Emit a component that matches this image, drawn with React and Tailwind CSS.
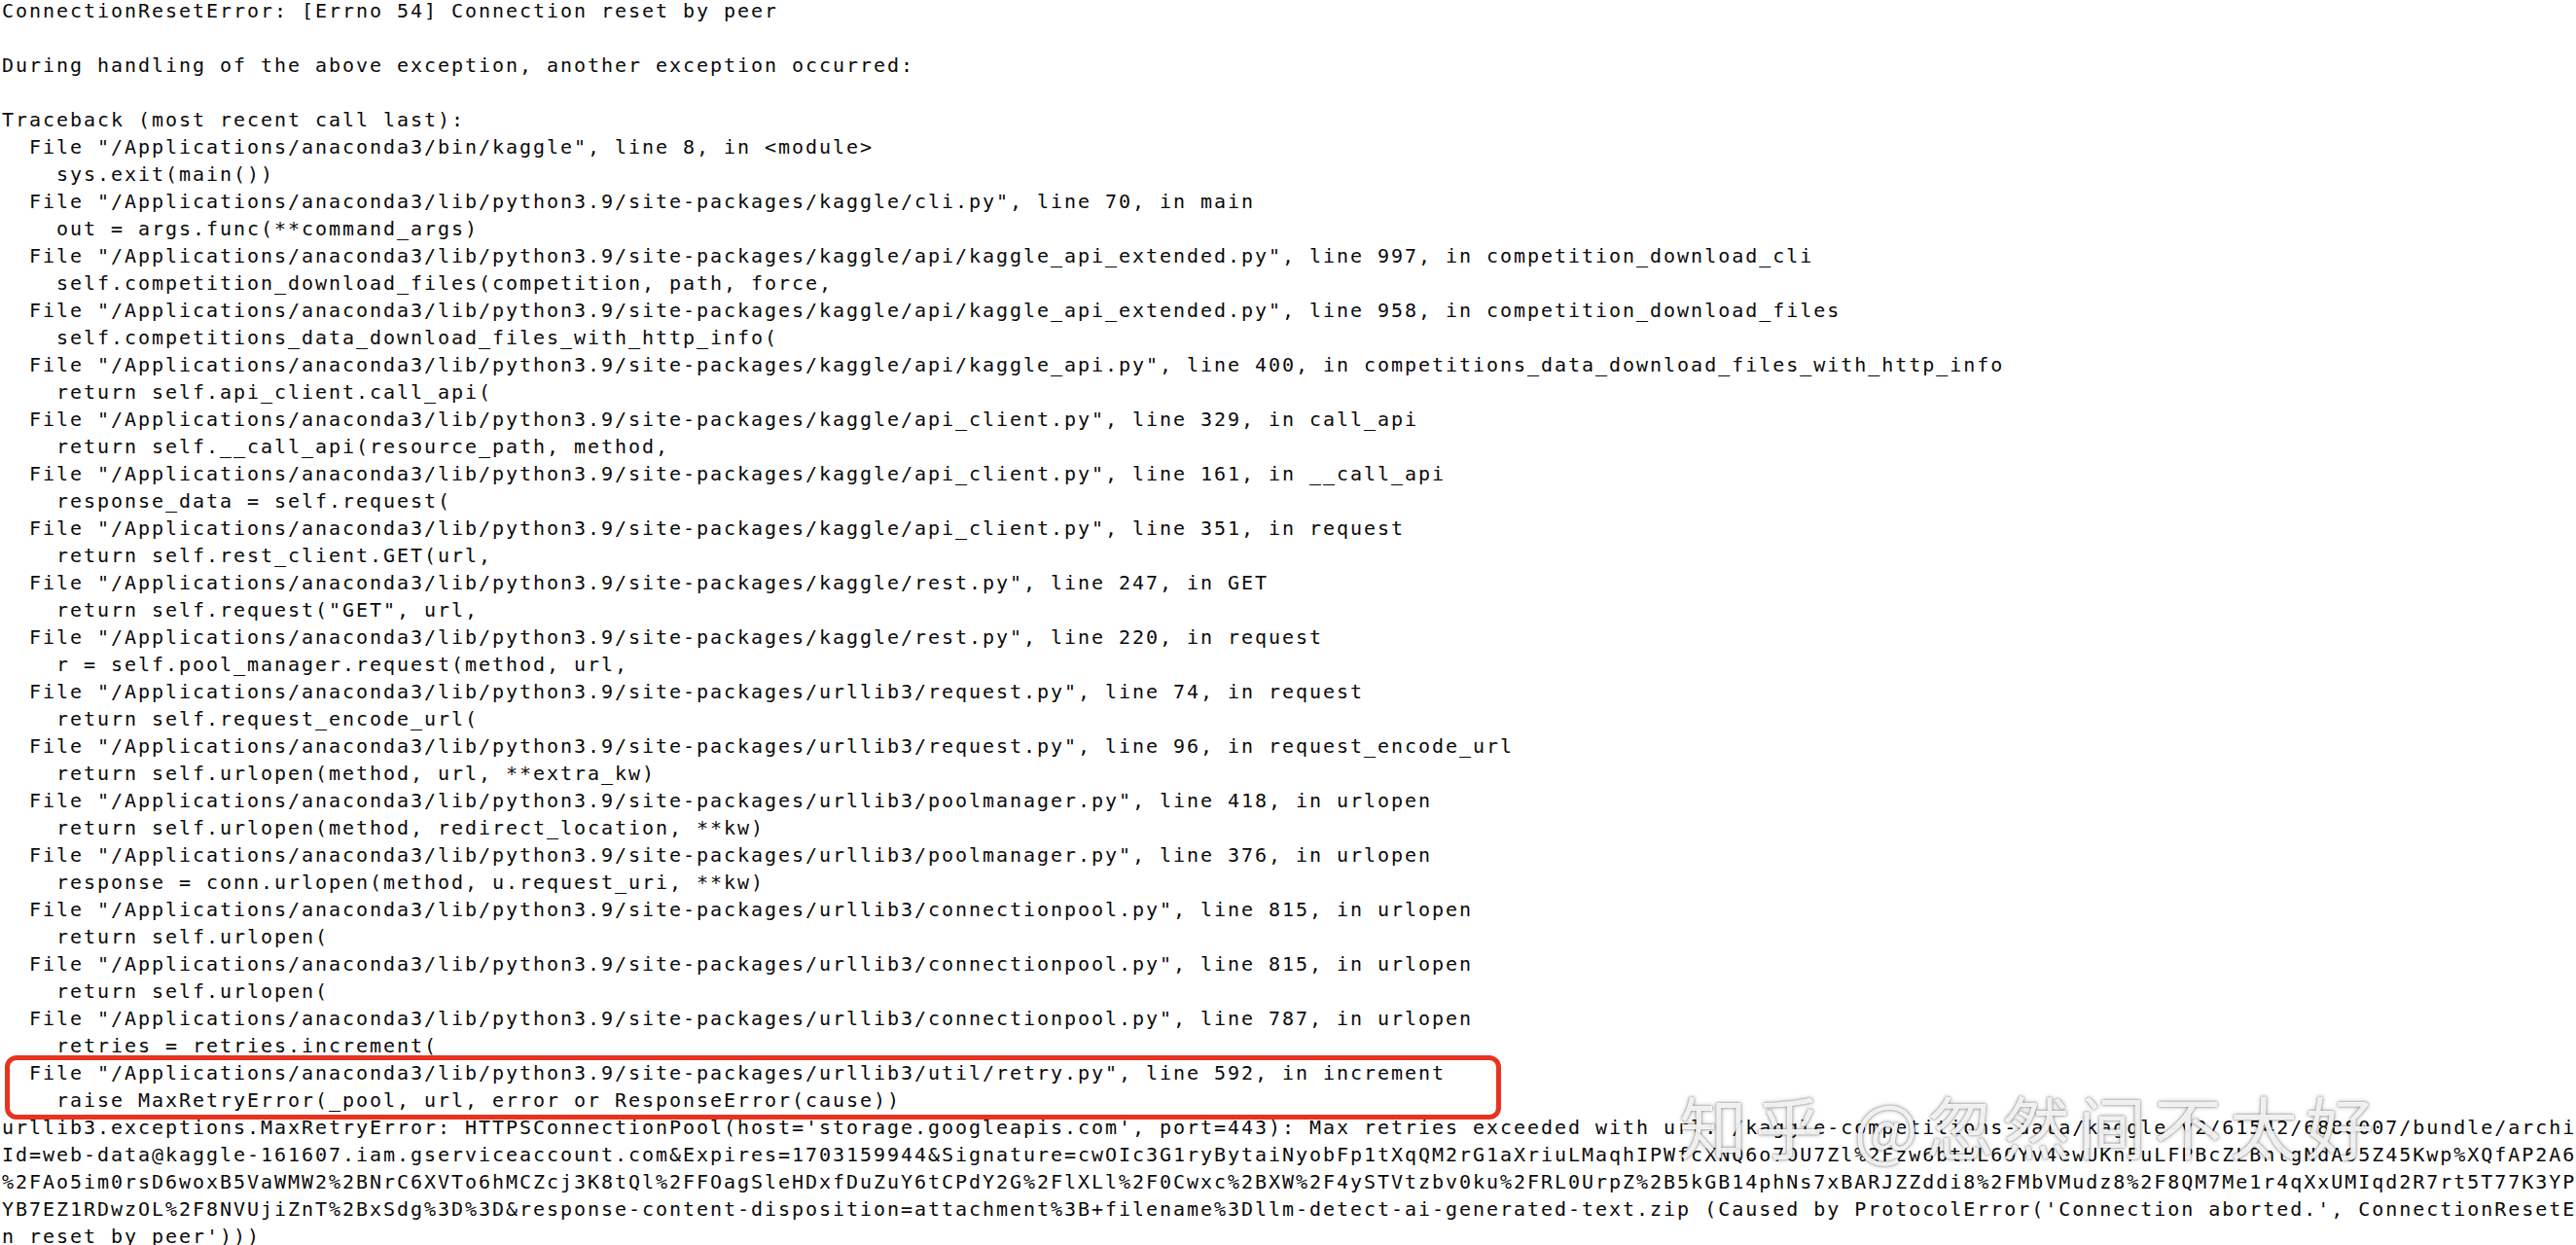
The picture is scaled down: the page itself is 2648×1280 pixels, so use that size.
const PKG = '"/Applications/anaconda3/lib/python3.9/site-packages/'

const lines = [
  'ConnectionResetError: [Errno 54] Connection reset by peer',
  '',
  'During handling of the above exception, another exception occurred:',
  '',
  'Traceback (most recent call last):',
  '  File "/Applications/anaconda3/bin/kaggle", line 8, in <module>',
  '    sys.exit(main())',
  `  File ${PKG}kaggle/cli.py", line 70, in main`,
  '    out = args.func(**command_args)',
  `  File ${PKG}kaggle/api/kaggle_api_extended.py", line 997, in competition_download_cli`,
  '    self.competition_download_files(competition, path, force,',
  `  File ${PKG}kaggle/api/kaggle_api_extended.py", line 958, in competition_download_files`,
  '    self.competitions_data_download_files_with_http_info(',
  `  File ${PKG}kaggle/api/kaggle_api.py", line 400, in competitions_data_download_files_with_http_info`,
  '    return self.api_client.call_api(',
  `  File ${PKG}kaggle/api_client.py", line 329, in call_api`,
  '    return self.__call_api(resource_path, method,',
  `  File ${PKG}kaggle/api_client.py", line 161, in __call_api`,
  '    response_data = self.request(',
  `  File ${PKG}kaggle/api_client.py", line 351, in request`,
  '    return self.rest_client.GET(url,',
  `  File ${PKG}kaggle/rest.py", line 247, in GET`,
  '    return self.request("GET", url,',
  `  File ${PKG}kaggle/rest.py", line 220, in request`,
  '    r = self.pool_manager.request(method, url,',
  `  File ${PKG}urllib3/request.py", line 74, in request`,
  '    return self.request_encode_url(',
  `  File ${PKG}urllib3/request.py", line 96, in request_encode_url`,
  '    return self.urlopen(method, url, **extra_kw)',
  `  File ${PKG}urllib3/poolmanager.py", line 418, in urlopen`,
  '    return self.urlopen(method, redirect_location, **kw)',
  `  File ${PKG}urllib3/poolmanager.py", line 376, in urlopen`,
  '    response = conn.urlopen(method, u.request_uri, **kw)',
  `  File ${PKG}urllib3/connectionpool.py", line 815, in urlopen`,
  '    return self.urlopen(',
  `  File ${PKG}urllib3/connectionpool.py", line 815, in urlopen`,
  '    return self.urlopen(',
  `  File ${PKG}urllib3/connectionpool.py", line 787, in urlopen`,
  '    retries = retries.increment(',
  `  File ${PKG}urllib3/util/retry.py", line 592, in increment`,
  '    raise MaxRetryError(_pool, url, error or ResponseError(cause))',
  "urllib3.exceptions.MaxRetryError: HTTPSConnectionPool(host='storage.googleapis.com', port=443): Max retries exceeded with url: /kaggle-competitions-data/kaggle-v2/61542/6888007/bundle/archi",
  'Id=web-data@kaggle-161607.iam.gserviceaccount.com&Expires=1703159944&Signature=cwOIc3G1ryBytaiNyobFp1tXqQM2rG1aXriuLMaqhIPWfcXNQ6o7OU7Zl%2Fzw6btHL6OYv4ewUKnFuLFPBcZLBnlgNdA65Z45Kwp%XQfAP2A6',
  '%2FAo5im0rsD6woxB5VaWMW2%2BNrC6XVTo6hMCZcj3K8tQl%2FFOagSleHDxfDuZuY6tCPdY2G%2FlXLl%2F0Cwxc%2BXW%2F4ySTVtzbv0ku%2FRL0UrpZ%2B5kGB14phNs7xBARJZZddi8%2FMbVMudz8%2F8QM7Me1r4qXxUMIqd2R7rt5T77K3YP',
  "YB7EZ1RDwzOL%2F8NVUjiZnT%2BxSdg%3D%3D&response-content-disposition=attachment%3B+filename%3Dllm-detect-ai-generated-text.zip (Caused by ProtocolError('Connection aborted.', ConnectionResetE",
  "n reset by peer')))",
]

export default function App() {
  return (
    <div className="relative w-[2648px] h-[1280px] overflow-hidden bg-white">
      {/* terminal output */}
      <div className="-mt-[3px] pl-[2px] font-['DejaVu_Sans_Mono',monospace] text-[20px] leading-[28px] tracking-[1.96px] text-[#0a0a0a] whitespace-pre">
        {lines.map((l, i) => (
          <div key={i} className="h-[28px]">{l}</div>
        ))}
      </div>

      {/* red highlight around retry.py frame */}
      <div className="absolute left-[5px] top-[1085px] w-[1538px] h-[66px] rounded-[12px] border-[5px] border-[#e8331f]" />

      {/* zhihu watermark */}
      <div className="absolute left-[1726px] top-[1112px] whitespace-nowrap font-['Noto_Sans_CJK_SC',sans-serif] text-[70px] leading-[90px] tracking-[8px] text-white/90 [text-shadow:0_0_2px_rgba(0,0,0,0.5),0_0_5px_rgba(0,0,0,0.3)]">
        知乎 @忽然间不太好
      </div>
    </div>
  )
}
